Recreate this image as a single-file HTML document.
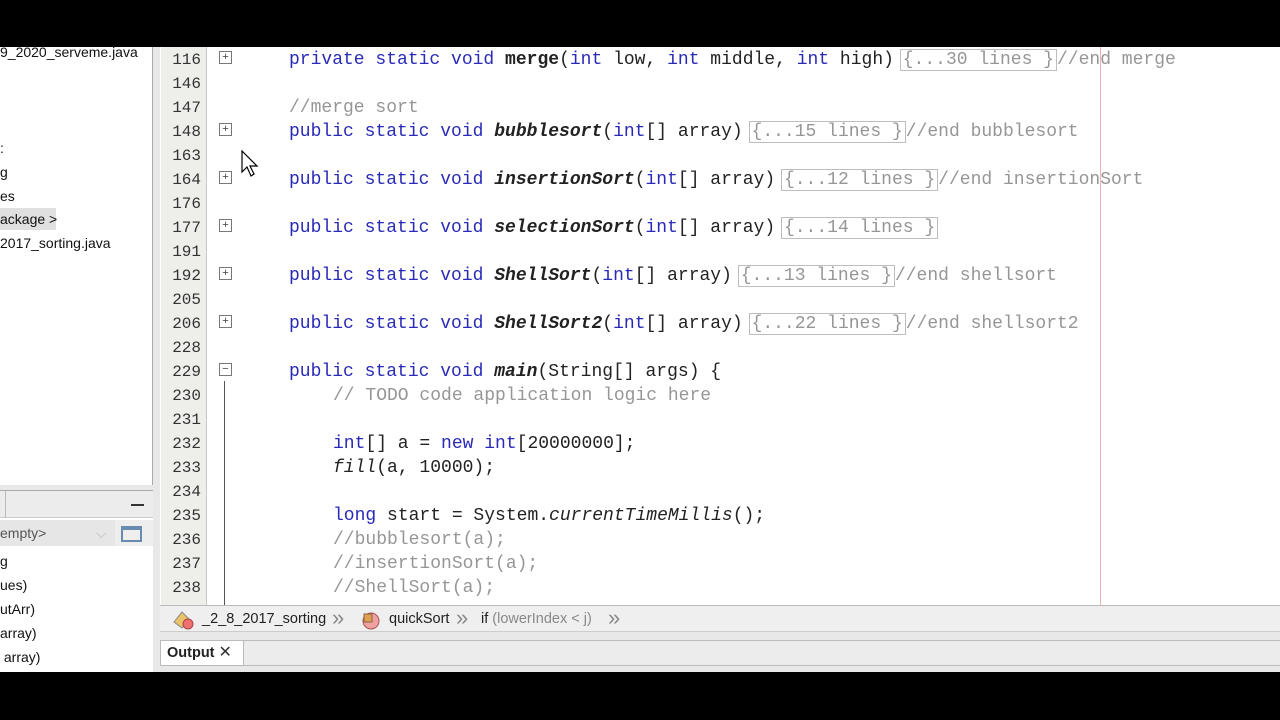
<!DOCTYPE html>
<html><head><meta charset="utf-8"><style>
*{margin:0;padding:0;box-sizing:border-box}
body{width:1280px;height:720px;background:#000;position:relative;overflow:hidden;font-family:"Liberation Sans",sans-serif}
.abs{position:absolute}
.lp{left:0;top:47px;width:153px;height:438px;background:#fff;border-right:1px solid #aaa}
.lp div,.nav div{position:absolute;left:0;font-size:14px;color:#111;white-space:nowrap;line-height:18px}
.code{left:160px;top:47px;width:1120px;height:558px;background:#fff;overflow:hidden}
.gut{position:absolute;left:1px;top:0;width:46px;height:558px;background:#eeeeea;border-right:1px solid #c8c8c8}
.ln{position:absolute;width:46px;text-align:right;font:16px/24px "Liberation Mono",monospace;color:#333;padding-right:5px}
.c{position:absolute;font:18px/24px "Liberation Mono",monospace;color:#222;white-space:pre}
.k{color:#2a2ab8}
.cm{color:#969696}
.b{font-weight:bold}.i{font-style:italic}
.fb{border:1px solid #bdbdbd;color:#969696;padding:0 2px;margin-left:-5px;line-height:20px;display:inline-block}
.fold{position:absolute;left:59px;width:13px;height:13px;border:1px solid #777;background:#fff;font:11px/11px "Liberation Sans";text-align:center;color:#444}
</style></head><body>
<div class="abs" style="left:0;top:47px;width:160px;height:625px;background:#e8e8e8"></div>
<div class="abs lp">
<div style="top:-4px">9_2020_serveme.java</div>
<div style="top:92px">:</div>
<div style="top:116px">g</div>
<div style="top:140px">es</div>
<div style="top:161px;width:56px;height:22px;background:#e0e0e0;line-height:22px">ackage &gt;</div>
<div style="top:187px">2017_sorting.java</div>
</div>
<div class="abs" style="left:0;top:490px;width:153px;height:28px;background:#ececec;border-top:1px solid #aaa;border-bottom:1px solid #ccc"><div style="position:absolute;left:5px;top:0;width:1px;height:28px;background:#bbb"></div><div style="position:absolute;left:131px;top:13px;width:13px;height:2px;background:#333"></div></div>
<div class="abs nav" style="left:0;top:518px;width:153px;height:154px;background:#fff">
<div style="top:2px;width:115px;height:26px;background:#e6e6e6;line-height:26px;color:#555">empty&gt;<span style="position:absolute;left:96px;color:#bbb">⌵</span></div>
<div style="top:2px;left:115px;width:38px;height:26px;background:#eee"></div>
<div style="top:8px;left:121px;width:21px;height:16px;border:2px solid #6a8bb0;border-top-width:4px"></div>
<div style="top:34px">g</div>
<div style="top:58px">ues)</div>
<div style="top:82px">utArr)</div>
<div style="top:106px">array)</div>
<div style="top:130px">&nbsp;array)</div>
</div>
<div class="abs code">
<div class="gut"></div>
<div class="abs" style="left:940px;top:0;width:1px;height:558px;background:#f0b0b0"></div>
<div class="abs" style="left:64px;top:334px;width:1px;height:224px;background:#555"></div>
<div class="ln" style="top:1px;left:0">116</div>
<div class="ln" style="top:25px;left:0">146</div>
<div class="ln" style="top:49px;left:0">147</div>
<div class="ln" style="top:73px;left:0">148</div>
<div class="ln" style="top:97px;left:0">163</div>
<div class="ln" style="top:121px;left:0">164</div>
<div class="ln" style="top:145px;left:0">176</div>
<div class="ln" style="top:169px;left:0">177</div>
<div class="ln" style="top:193px;left:0">191</div>
<div class="ln" style="top:217px;left:0">192</div>
<div class="ln" style="top:241px;left:0">205</div>
<div class="ln" style="top:265px;left:0">206</div>
<div class="ln" style="top:289px;left:0">228</div>
<div class="ln" style="top:313px;left:0">229</div>
<div class="ln" style="top:337px;left:0">230</div>
<div class="ln" style="top:361px;left:0">231</div>
<div class="ln" style="top:385px;left:0">232</div>
<div class="ln" style="top:409px;left:0">233</div>
<div class="ln" style="top:433px;left:0">234</div>
<div class="ln" style="top:457px;left:0">235</div>
<div class="ln" style="top:481px;left:0">236</div>
<div class="ln" style="top:505px;left:0">237</div>
<div class="ln" style="top:529px;left:0">238</div>
<div class="ln" style="top:553px;left:0">239</div>
<div class="fold" style="top:4px">+</div>
<div class="fold" style="top:76px">+</div>
<div class="fold" style="top:124px">+</div>
<div class="fold" style="top:172px">+</div>
<div class="fold" style="top:220px">+</div>
<div class="fold" style="top:268px">+</div>
<div class="fold" style="top:316px">−</div>
<div class="c" style="left:129px;top:1px"><span class="k">private static void</span> <span class="b">merge</span>(<span class="k">int</span> low, <span class="k">int</span> middle, <span class="k">int</span> high) <span class="fb">{...30 lines }</span><span class="cm">//end merge</span></div>
<div class="c cm" style="left:129px;top:49px">//merge sort</div>
<div class="c" style="left:129px;top:73px"><span class="k">public static void</span> <span class="b i">bubblesort</span>(<span class="k">int</span>[] array) <span class="fb">{...15 lines }</span><span class="cm">//end bubblesort</span></div>
<div class="c" style="left:129px;top:121px"><span class="k">public static void</span> <span class="b i">insertionSort</span>(<span class="k">int</span>[] array) <span class="fb">{...12 lines }</span><span class="cm">//end insertionSort</span></div>
<div class="c" style="left:129px;top:169px"><span class="k">public static void</span> <span class="b i">selectionSort</span>(<span class="k">int</span>[] array) <span class="fb">{...14 lines }</span></div>
<div class="c" style="left:129px;top:217px"><span class="k">public static void</span> <span class="b i">ShellSort</span>(<span class="k">int</span>[] array) <span class="fb">{...13 lines }</span><span class="cm">//end shellsort</span></div>
<div class="c" style="left:129px;top:265px"><span class="k">public static void</span> <span class="b i">ShellSort2</span>(<span class="k">int</span>[] array) <span class="fb">{...22 lines }</span><span class="cm">//end shellsort2</span></div>
<div class="c" style="left:129px;top:313px"><span class="k">public static void</span> <span class="b i">main</span>(String[] args) {</div>
<div class="c cm" style="left:173px;top:337px">// TODO code application logic here</div>
<div class="c" style="left:173px;top:385px"><span class="k">int</span>[] a = <span class="k">new int</span>[20000000];</div>
<div class="c" style="left:173px;top:409px"><span class="i">fill</span>(a, 10000);</div>
<div class="c" style="left:173px;top:457px"><span class="k">long</span> start = System.<span class="i">currentTimeMillis</span>();</div>
<div class="c cm" style="left:173px;top:481px">//bubblesort(a);</div>
<div class="c cm" style="left:173px;top:505px">//insertionSort(a);</div>
<div class="c cm" style="left:173px;top:529px">//ShellSort(a);</div>
</div>
<svg class="abs" style="left:240px;top:150px" width="22" height="30" viewBox="0 0 22 30"><path d="M2 1 L2 22 L7 17 L11 26 L14 24 L10 16 L17 16 Z" fill="#fff" stroke="#000" stroke-width="1.2"/></svg>
<div class="abs" style="left:160px;top:605px;width:1120px;height:27px;background:#efefef;border-top:1px solid #bbb;border-bottom:1px solid #ccc;font-size:14.5px;line-height:26px;color:#222;white-space:nowrap">
<svg style="position:absolute;left:13px;top:4px" width="22" height="20"><path d="M1 12 L9 2 L17 10 L9 18 Z" fill="#e9c26a" stroke="#888"/><circle cx="15" cy="14" r="5" fill="#f07070" stroke="#a44"/></svg>
<span style="position:absolute;left:42px">_2_8_2017_sorting</span>
<span style="position:absolute;left:172px;color:#888;font-size:22px;line-height:24px">»</span>
<svg style="position:absolute;left:200px;top:4px" width="22" height="20"><circle cx="11" cy="11" r="8" fill="#f0a0a0" stroke="#a55"/><rect x="4" y="4" width="8" height="8" fill="#e0a050" stroke="#864"/></svg>
<span style="position:absolute;left:229px">quickSort</span>
<span style="position:absolute;left:296px;color:#888;font-size:22px;line-height:24px">»</span>
<span style="position:absolute;left:321px">if <span style="color:#888">(lowerIndex &lt; j)</span></span>
<span style="position:absolute;left:448px;color:#888;font-size:22px;line-height:24px">»</span>
</div>
<div class="abs" style="left:160px;top:632px;width:1120px;height:40px;background:#e8e8e8"></div>
<div class="abs" style="left:160px;top:640px;width:1120px;height:26px;background:#ececec;border-top:1px solid #bbb;border-bottom:1px solid #bbb"></div>
<div class="abs" style="left:160px;top:640px;width:84px;height:26px;background:#fff;border:1px solid #bbb;font-size:14.5px;font-weight:bold;line-height:24px;padding-left:6px;color:#222">Output <span style="font-weight:normal;color:#333;font-size:16px">✕</span></div>
</body></html>
